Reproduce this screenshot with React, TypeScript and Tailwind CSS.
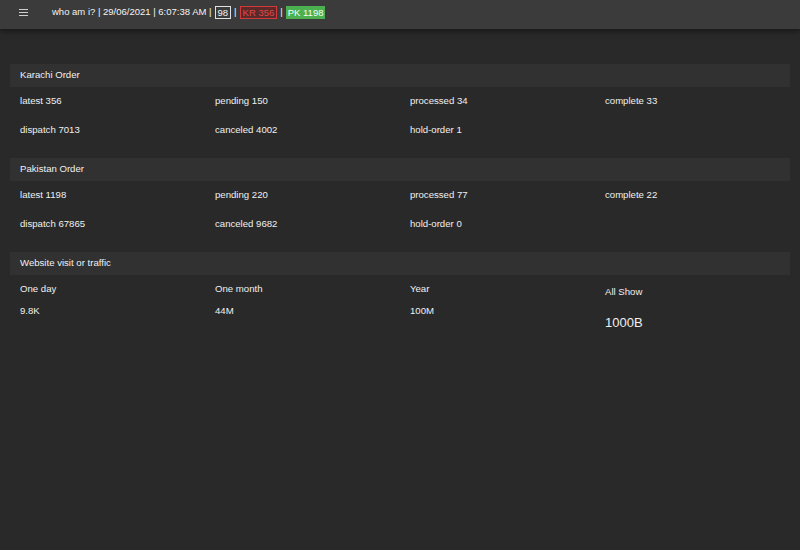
import React from "react";

const font = { fontFamily: '"Liberation Sans", Arial, sans-serif' };

function Section({ title, rows }: { title: string; rows: string[][] }) {
  return (
    <div className="mb-[13px]">
      <div className="h-[23px] bg-[#313131] flex items-center px-[10px] text-[9.6px] text-[#f0f0f0]">{title}</div>
      {rows.map((r, i) => (
        <div key={i} className="grid grid-cols-[repeat(4,195px)] px-[10px] h-[29px] items-center text-[9.6px] text-[#f0f0f0]">
          {r.map((c, j) => (
            <div key={j}>{c}</div>
          ))}
        </div>
      ))}
    </div>
  );
}

export default function App() {
  return (
    <div className="w-[800px] h-[550px] bg-[#292929] overflow-hidden" style={font}>
      <div className="h-[29px] bg-[#3b3b3b] flex items-center shadow-[0_2px_6px_rgba(0,0,0,0.5)] relative z-10">
        <div className="w-[52px] flex pl-[19px]">
          <div className="flex flex-col gap-[2px] w-[9px] -mt-[4px]">
            <div className="h-px bg-[#cfcfcf]" />
            <div className="h-px bg-[#cfcfcf]" />
            <div className="h-px bg-[#cfcfcf]" />
          </div>
        </div>
        <div className="text-[9.5px] text-[#f4f4f4] flex items-center gap-[3px] -mt-[5px]">
          <span>who am i? | 29/06/2021 | 6:07:38 AM |</span>
          <span className="border border-[#e0e0e0] px-[2px] leading-[11px]">98</span>
          <span>|</span>
          <span className="border border-[#d03a3a] bg-[#5a2a2a] text-[#e04848] px-[2px] leading-[11px]">KR 356</span>
          <span>|</span>
          <span className="bg-[#4caf50] text-[#f4fff4] px-[2px] leading-[13px]">PK 1198</span>
        </div>
      </div>
      <div className="px-[10px] pt-[35px]">
        <Section
          title="Karachi Order"
          rows={[
            ["latest 356", "pending 150", "processed 34", "complete 33"],
            ["dispatch 7013", "canceled 4002", "hold-order 1", ""],
          ]}
        />
        <Section
          title="Pakistan Order"
          rows={[
            ["latest 1198", "pending 220", "processed 77", "complete 22"],
            ["dispatch 67865", "canceled 9682", "hold-order 0", ""],
          ]}
        />
        <div>
          <div className="h-[23px] bg-[#313131] flex items-center px-[10px] text-[9.6px] text-[#f0f0f0]">Website visit or traffic</div>
          <div className="grid grid-cols-[repeat(4,195px)] px-[10px] text-[9.6px] text-[#f0f0f0]">
            <div className="flex flex-col gap-[8px] pt-[7px]">
              <div>One day</div>
              <div>9.8K</div>
            </div>
            <div className="flex flex-col gap-[8px] pt-[7px]">
              <div>One month</div>
              <div>44M</div>
            </div>
            <div className="flex flex-col gap-[8px] pt-[7px]">
              <div>Year</div>
              <div>100M</div>
            </div>
            <div className="flex flex-col gap-[14px] pt-[10px]">
              <div>All Show</div>
              <div className="text-[13px]">1000B</div>
            </div>
          </div>
        </div>
      </div>
    </div>
  );
}
